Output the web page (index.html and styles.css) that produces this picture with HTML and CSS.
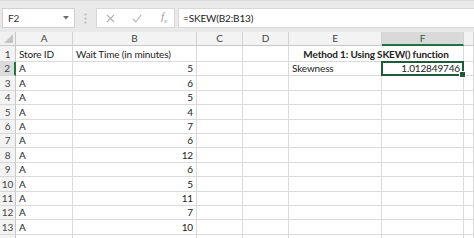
FILE: index.html
```html
<!DOCTYPE html>
<html>
<head>
<meta charset="utf-8">
<link rel="stylesheet" href="styles.css">
</head>
<body>
<div class="app">
  <div class="fbar">
    <div class="namebox">
      <span class="nb-text">F2</span>
      <svg class="nb-arrow" width="6" height="4" viewBox="0 0 6 4"><path d="M0 0H6L3 3.5Z" fill="#6b6b6b"/></svg>
    </div>
    <div class="grip">
      <svg width="3" height="11" viewBox="0 0 3 11"><circle cx="1.5" cy="1.5" r="1" fill="#b5b5b5"/><circle cx="1.5" cy="5.5" r="1" fill="#b5b5b5"/><circle cx="1.5" cy="9.5" r="1" fill="#b5b5b5"/></svg>
    </div>
    <div class="fxbox">
      <svg class="ic" width="9" height="9" viewBox="0 0 9 9"><path d="M1 1L8 8M8 1L1 8" stroke="#b3b3b3" stroke-width="1.1" fill="none"/></svg>
      <svg class="ic" width="10" height="9" viewBox="0 0 10 9"><path d="M1 5L3.8 8L9 1" stroke="#b3b3b3" stroke-width="1.1" fill="none"/></svg>
      <span class="fx"><i>f</i><sub>x</sub></span>
    </div>
    <div class="formula">=SKEW(B2:B13)</div>
  </div>
  <div class="sheet">
    <div class="corner"><svg width="9" height="9" viewBox="0 0 9 9"><path d="M9 0V9H0Z" fill="#c4c4c4"/></svg></div>
    <div class="ch">A</div>
    <div class="ch">B</div>
    <div class="ch">C</div>
    <div class="ch">D</div>
    <div class="ch">E</div>
    <div class="ch sel">F</div>
    <div class="ch"></div>

    <div class="rh">1</div>
    <div class="c">Store ID</div>
    <div class="c">Wait Time (in minutes)</div>
    <div class="c"></div>
    <div class="c"></div>
    <div class="c merged b">Method 1: Using SKEW() function</div>
    <div class="c"></div>

    <div class="rh sel">2</div>
    <div class="c">A</div>
    <div class="c n">5</div>
    <div class="c"></div>
    <div class="c"></div>
    <div class="c">Skewness</div>
    <div class="c n active">1.012849746</div>
    <div class="c"></div>

    <div class="rh">3</div><div class="c">A</div><div class="c n">6</div><div class="c"></div><div class="c"></div><div class="c"></div><div class="c"></div><div class="c"></div>
    <div class="rh">4</div><div class="c">A</div><div class="c n">5</div><div class="c"></div><div class="c"></div><div class="c"></div><div class="c"></div><div class="c"></div>
    <div class="rh">5</div><div class="c">A</div><div class="c n">4</div><div class="c"></div><div class="c"></div><div class="c"></div><div class="c"></div><div class="c"></div>
    <div class="rh">6</div><div class="c">A</div><div class="c n">7</div><div class="c"></div><div class="c"></div><div class="c"></div><div class="c"></div><div class="c"></div>
    <div class="rh">7</div><div class="c">A</div><div class="c n">6</div><div class="c"></div><div class="c"></div><div class="c"></div><div class="c"></div><div class="c"></div>
    <div class="rh">8</div><div class="c">A</div><div class="c n">12</div><div class="c"></div><div class="c"></div><div class="c"></div><div class="c"></div><div class="c"></div>
    <div class="rh">9</div><div class="c">A</div><div class="c n">6</div><div class="c"></div><div class="c"></div><div class="c"></div><div class="c"></div><div class="c"></div>
    <div class="rh">10</div><div class="c">A</div><div class="c n">5</div><div class="c"></div><div class="c"></div><div class="c"></div><div class="c"></div><div class="c"></div>
    <div class="rh">11</div><div class="c">A</div><div class="c n">11</div><div class="c"></div><div class="c"></div><div class="c"></div><div class="c"></div><div class="c"></div>
    <div class="rh">12</div><div class="c">A</div><div class="c n">7</div><div class="c"></div><div class="c"></div><div class="c"></div><div class="c"></div><div class="c"></div>
    <div class="rh">13</div><div class="c">A</div><div class="c n">10</div><div class="c"></div><div class="c"></div><div class="c"></div><div class="c"></div><div class="c"></div>
    <div class="rh"></div><div class="c"></div><div class="c"></div><div class="c"></div><div class="c"></div><div class="c"></div><div class="c"></div><div class="c"></div>
  </div>
</div>
</body>
</html>
```

FILE: styles.css
```css
* { box-sizing: border-box; }
html, body { margin: 0; padding: 0; }
body {
  width: 474px;
  height: 238px;
  overflow: hidden;
  background: #e6e6e6;
  font-family: Lato, "Liberation Sans", sans-serif;
  font-size: 10px;
  letter-spacing: -0.15px;
  color: #222;
}
.app { width: 474px; height: 238px; overflow: hidden; }

.fbar {
  height: 32px;
  padding-top: 7px;
  display: flex;
  align-items: flex-start;
  background: #e9e9e9;
  border-top: 1px solid #dcdcdc;
}
.namebox {
  margin-left: 2px;
  width: 73px;
  height: 20px;
  background: #fff;
  border: 1px solid #d0d0d0;
  display: flex;
  align-items: center;
  justify-content: space-between;
  padding: 0 5px 0 5px;
}
.nb-text { color: #333; }
.nb-arrow { display: block; }
.grip {
  width: 21px;
  height: 20px;
  display: flex;
  align-items: center;
  justify-content: center;
}
.grip svg { display: block; }
.fxbox {
  width: 79px;
  height: 20px;
  background: #fff;
  border: 1px solid #d8d8d8;
  display: flex;
  align-items: center;
  padding-left: 9px;
  gap: 17px;
}
.ic { display: block; }
.fx {
  font-family: "Liberation Serif", serif;
  color: #9a9a9a;
  font-size: 11px;
  margin-left: 2px;
}
.fx sub { font-size: 7px; font-style: italic; }
.formula {
  margin-left: 3px;
  flex: 1;
  height: 20px;
  background: #fff;
  border: 1px solid #d8d8d8;
  border-right: none;
  padding-left: 4px;
  line-height: 18px;
  color: #222;
}

.sheet {
  display: grid;
  grid-template-columns: 16px 57px 124px 46px 46px 93px 82px 10px;
  grid-template-rows: 14px 16px repeat(12, 14.4px) 12px;
  background: #fff;
}
.corner {
  background: #f0f0f0;
  border-right: 1px solid #c8c8c8;
  border-bottom: 1px solid #c8c8c8;
  display: flex;
  align-items: flex-end;
  justify-content: flex-end;
  padding: 0 2px 2px 0;
}
.corner svg { display: block; }
.ch {
  background: #f3f3f3;
  border-right: 1px solid #d2d2d2;
  border-bottom: 1px solid #c8c8c8;
  text-align: center;
  line-height: 13px;
  color: #444;
}
.ch.sel {
  background: #d9d9d9;
  border-bottom: 2px solid #217346;
  color: #2e5e3e;
}
.rh {
  background: #f3f3f3;
  border-right: 1px solid #c8c8c8;
  border-bottom: 1px solid #d8d8d8;
  text-align: center;
  color: #444;
  display: flex;
  align-items: flex-end;
  justify-content: center;
  padding-bottom: 1px;
}
.rh.sel {
  background: #dcdcdc;
  border-right: 2px solid #217346;
}
.c {
  border-right: 1px solid #dadada;
  border-bottom: 1px solid #dadada;
  padding: 0 3px 1px 3px;
  display: flex;
  align-items: flex-end;
  white-space: nowrap;
  overflow: visible;
  color: #222;
}
.c.n { justify-content: flex-end; }
.merged { grid-column: span 2; justify-content: center; }
.b { font-weight: 700; }
.active { position: relative; }
.active::after {
  content: "";
  position: absolute;
  left: -1px;
  top: -1px;
  right: -1px;
  bottom: -1px;
  border: 2px solid #1e5b38;
}
.active::before {
  content: "";
  position: absolute;
  right: -3px;
  bottom: -3px;
  width: 5px;
  height: 5px;
  background: #1e5b38;
  border: 1px solid #fff;
  z-index: 2;
}
```
